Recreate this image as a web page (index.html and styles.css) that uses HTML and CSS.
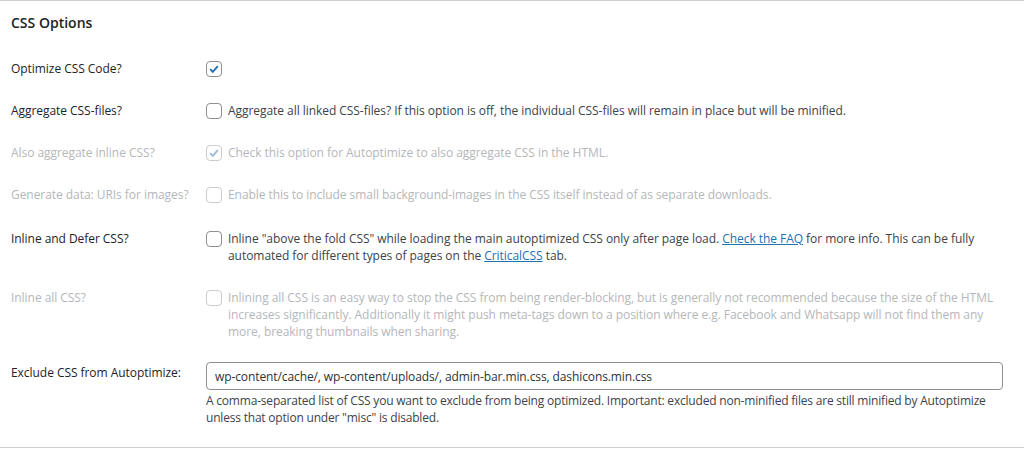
FILE: index.html
```html
<!DOCTYPE html>
<html lang="en">
<head>
    <meta charset="UTF-8">
    <title>CSS Options</title>
    <link rel="stylesheet" href="styles.css">
</head>
<body>

    <!-- CSS Options panel -->
    <div class="panel">
        <h2 class="panel-title">CSS Options</h2>

        <div class="option-row">
            <div class="option-label">Optimize CSS Code?</div>
            <div class="option-field">
                <span class="checkbox checked">
                    <svg viewBox="0 0 16 16"><path d="M3.6 8.2l3 3 5.8-6.6" /></svg>
                </span>
            </div>
        </div>

        <div class="option-row">
            <div class="option-label">Aggregate CSS-files?</div>
            <div class="option-field">
                <span class="checkbox"></span>
                <span class="option-text">Aggregate all linked CSS-files? If this option is off, the individual CSS-files will remain in place but will be minified.</span>
            </div>
        </div>

        <div class="option-row disabled">
            <div class="option-label">Also aggregate inline CSS?</div>
            <div class="option-field">
                <span class="checkbox checked">
                    <svg viewBox="0 0 16 16"><path d="M3.6 8.2l3 3 5.8-6.6" /></svg>
                </span>
                <span class="option-text">Check this option for Autoptimize to also aggregate CSS in the HTML.</span>
            </div>
        </div>

        <div class="option-row disabled">
            <div class="option-label">Generate data: URIs for images?</div>
            <div class="option-field">
                <span class="checkbox"></span>
                <span class="option-text">Enable this to include small background-images in the CSS itself instead of as separate downloads.</span>
            </div>
        </div>

        <div class="option-row wide-gap">
            <div class="option-label">Inline and Defer CSS?</div>
            <div class="option-field">
                <span class="checkbox"></span>
                <span class="option-text">Inline "above the fold CSS" while loading the main autoptimized CSS only after page load. <a href="#">Check the FAQ</a> for more info. This can be fully automated for different types of pages on the <a href="#">CriticalCSS</a> tab.</span>
            </div>
        </div>

        <div class="option-row disabled">
            <div class="option-label">Inline all CSS?</div>
            <div class="option-field">
                <span class="checkbox"></span>
                <span class="option-text">Inlining all CSS is an easy way to stop the CSS from being render-blocking, but is generally not recommended because the size of the HTML increases significantly. Additionally it might push meta-tags down to a position where e.g. Facebook and Whatsapp will not find them any more, breaking thumbnails when sharing.</span>
            </div>
        </div>

        <div class="option-row exclude-row">
            <div class="option-label">Exclude CSS from Autoptimize:</div>
            <div class="option-field stacked">
                <input class="text-input" type="text" value="wp-content/cache/, wp-content/uploads/, admin-bar.min.css, dashicons.min.css">
                <p class="description">A comma-separated list of CSS you want to exclude from being optimized. Important: excluded non-minified files are still minified by Autoptimize unless that option under "misc" is disabled.</p>
            </div>
        </div>
    </div>

</body>
</html>
```

FILE: styles.css
```css
body {
    margin: 0;
    background: #fff;
    font-family: "Open Sans", "Noto Sans", sans-serif;
    font-size: 12px;
    letter-spacing: -0.05px;
    color: #3c434a;
}

/* Panel */
.panel {
    border-top: 1px solid #d0d0d0;
    border-bottom: 1px solid #d0d0d0;
    height: 448px;
    box-sizing: border-box;
}

.panel-title {
    margin: 0;
    padding: 13px 11px 0;
    font-size: 14px;
    font-weight: 600;
    line-height: 18px;
    letter-spacing: 0;
    color: #1d2327;
}

/* Option rows */
.option-row {
    display: grid;
    grid-template-columns: 206px 1fr;
    padding: 12.5px 21px 12.5px 0;
    line-height: 17px;
}

.option-row:first-of-type {
    margin-top: 15px;
}

.option-row.wide-gap {
    padding-top: 14.5px;
}

.option-label {
    padding-left: 11px;
    color: #1d2327;
}

.option-field {
    display: flex;
    align-items: flex-start;
    gap: 6px;
}

.option-field.stacked {
    flex-direction: column;
    gap: 0;
}

.option-text {
    flex: 1;
}

.option-text a {
    color: #2271b1;
}

/* Disabled rows */
.disabled .option-label,
.disabled .option-text {
    color: #b4b7ba;
}

.disabled .checkbox {
    opacity: 0.45;
}

/* Checkbox */
.checkbox {
    flex: none;
    width: 14px;
    height: 14px;
    margin-top: 1px;
    border: 1px solid #8c8f94;
    border-radius: 4px;
    background: #fff;
    display: flex;
}

.checkbox svg {
    width: 14px;
    height: 14px;
    fill: none;
    stroke: #2271b1;
    stroke-width: 2.2;
}

/* Exclude field */
.exclude-row {
    padding-top: 10px;
}

.exclude-row .option-label {
    padding-top: 2px;
}

.text-input {
    width: 100%;
    box-sizing: border-box;
    height: 28px;
    margin: 0;
    padding: 0 8px;
    border: 1px solid #8c8f94;
    border-radius: 4px;
    font-family: inherit;
    font-size: 12px;
    letter-spacing: -0.1px;
    color: #2c3338;
}

.description {
    margin: 2px 0 0;
    line-height: 17px;
    letter-spacing: -0.2px;
}
```
